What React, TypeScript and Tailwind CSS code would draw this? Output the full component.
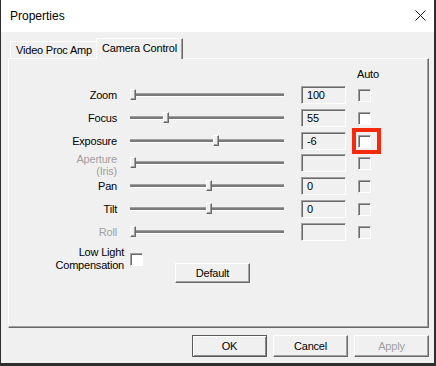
import React from 'react'

interface Row {
  label: string[]
  pos: number
  value: string
  enabled: boolean
  autoOn: boolean
  h: string
  marked?: boolean
}

const rows: Row[] = [
  { label: ['Zoom'], pos: 0, value: '100', enabled: true, autoOn: false, h: 'h-[23px]' },
  { label: ['Focus'], pos: 33, value: '55', enabled: true, autoOn: true, h: 'h-[23px]' },
  { label: ['Exposure'], pos: 83, value: '-6', enabled: true, autoOn: true, h: 'h-[22px]', marked: true },
  { label: ['Aperture', '(Iris)'], pos: 0, value: '', enabled: false, autoOn: false, h: 'h-[23px]' },
  { label: ['Pan'], pos: 76, value: '0', enabled: true, autoOn: false, h: 'h-[23px]' },
  { label: ['Tilt'], pos: 76, value: '0', enabled: true, autoOn: false, h: 'h-[23px]' },
  { label: ['Roll'], pos: 0, value: '', enabled: false, autoOn: false, h: 'h-[23px]' },
]

const raised =
  'border border-t-white border-l-white border-r-[#696969] border-b-[#696969] shadow-[inset_-1px_-1px_0_#a0a0a0]'
const sunken =
  'border border-t-[#a0a0a0] border-l-[#a0a0a0] border-r-white border-b-white shadow-[inset_1px_1px_0_#696969]'

function Slider({ pos }: { pos: number }) {
  return (
    <div className="relative ml-[13px] w-[154px] h-[18px] flex items-center">
      <div className="w-full h-[4px] border-t border-t-[#a0a0a0] border-b border-b-white bg-[#7a7a7a]" />
      {/* thumb sits over the channel */}
      <div
        className={`absolute top-[3px] w-[6px] h-[11px] bg-[#f0f0f0] ${raised}`}
        style={{ left: pos }}
      />
    </div>
  )
}

function CheckBox({ on, className = '' }: { on: boolean; className?: string }) {
  return (
    <div className={`w-[13px] h-[13px] ${sunken} ${on ? 'bg-white' : 'bg-[#f0f0f0]'} ${className}`} />
  )
}

function Button({ label, disabled, isDefault }: { label: string; disabled?: boolean; isDefault?: boolean }) {
  return (
    <div
      className={`w-[75px] h-[22px] flex items-center justify-center text-[11px] bg-[#f0f0f0] ${
        isDefault
          ? 'border border-[#5a5a5a] shadow-[inset_1px_1px_0_white,inset_-1px_-1px_0_#8a8a8a]'
          : raised
      } ${disabled ? 'text-[#a0a0a0]' : 'text-black'}`}
    >
      {label}
    </div>
  )
}

export default function App() {
  return (
    <div className="w-[436px] h-[366px] bg-[#2e2e2e] pl-[1px] font-['Liberation_Sans',Arial,sans-serif] tracking-[-0.2px] select-none">
      <div className="w-[433px] h-[363px] bg-[#f0f0f0] flex flex-col">
        {/* Title bar */}
        <div className="h-[32px] bg-white flex items-center justify-between pl-[9px] pr-[8px]">
          <span className="text-[12px] text-black tracking-normal">Properties</span>
          <svg width="11" height="11" viewBox="0 0 11 11" className="mt-[-1px]">
            <path d="M0.5 0.5 L10.5 10.5 M10.5 0.5 L0.5 10.5" stroke="#1a1a1a" strokeWidth="1" fill="none" />
          </svg>
        </div>

        <div className="flex flex-col pl-[7px] pr-[5px] pt-[6px]">
          {/* Tabs */}
          <div className="h-[20px] flex items-end pl-[2px]">
            <div className="w-[87px] h-[17px] border-t border-l border-t-white border-l-white flex items-center justify-center text-[11px] text-black">
              Video Proc Amp
            </div>
            <div className="relative z-10 -ml-[1px] -mb-[1px] w-[87px] h-[21px] bg-[#f0f0f0] border-t border-l border-r border-t-white border-l-white border-r-[#696969] shadow-[inset_-1px_0_0_#a0a0a0] flex items-center justify-center text-[11px] text-black pb-[2px]">
              Camera Control
            </div>
          </div>

          {/* Panel */}
          <div className={`h-[270px] bg-[#f0f0f0] pt-[8px] ${raised}`}>
            <div className="h-[19px] pl-[348px] text-[11px] leading-[14px] text-black">Auto</div>

            {rows.map((r) => (
              <div key={r.label[0]} className={`flex items-start ${r.h}`}>
                <div
                  className={`w-[108px] h-[18px] flex flex-col items-end justify-center text-[11px] leading-[12.5px] ${
                    r.enabled ? 'text-black' : 'text-[#a0a0a0]'
                  } ${r.label.length > 1 ? 'mt-[2px]' : ''}`}
                >
                  {r.label.map((l) => (
                    <span key={l}>{l}</span>
                  ))}
                </div>
                <Slider pos={r.pos} />
                <div className={`ml-[17px] w-[45px] h-[18px] bg-[#f0f0f0] ${sunken} flex items-center pl-[5px] text-[11px] text-black`}>
                  {r.value}
                </div>
                <div className="relative ml-[12px] mt-[3px]">
                  <CheckBox on={r.autoOn} />
                  {r.marked && (
                    <div className="absolute -left-[6px] -top-[7px] w-[29px] h-[26px] border-[4px] border-[#f52a0c]" />
                  )}
                </div>
              </div>
            ))}

            <div className="flex items-start">
              <div className="flex items-center">
                <div className="w-[115px] flex flex-col items-end text-[11px] leading-[13px] text-black">
                  <span>Low Light</span>
                  <span>Compensation</span>
                </div>
                <CheckBox on={true} className="ml-[6px]" />
              </div>
              <div className={`ml-[32px] mt-[17px] w-[75px] h-[20px] bg-[#f0f0f0] ${raised} flex items-center justify-center text-[11px] text-black`}>
                Default
              </div>
            </div>
          </div>

          {/* Dialog buttons */}
          <div className="flex justify-end gap-[6px] mt-[7px]">
            <Button label="OK" isDefault />
            <Button label="Cancel" />
            <Button label="Apply" disabled />
          </div>
        </div>
      </div>
    </div>
  )
}
